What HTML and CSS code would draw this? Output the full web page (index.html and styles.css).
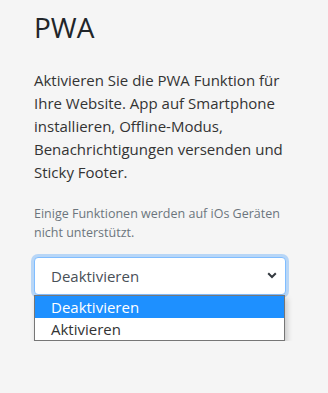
FILE: index.html
```html
<!DOCTYPE html>
<html lang="de">
<head>
    <meta charset="UTF-8">
    <meta name="viewport" content="width=device-width, initial-scale=1.0">
    <title>PWA</title>
    <link rel="stylesheet" href="styles.css">
</head>
<body>
    <div class="settings">
        <h3 class="title">PWA</h3>

        <p class="intro">Aktivieren Sie die PWA Funktion für Ihre Website. App auf Smartphone installieren, Offline-Modus, Benachrichtigungen versenden und Sticky Footer.</p>
        <p class="hint">Einige Funktionen werden auf iOs Geräten nicht unterstützt.</p>

        <div class="select-wrap">
            <div class="select-box">
                <span>Deaktivieren</span>
                <svg class="chevron" width="10" height="7" viewBox="0 0 10 7">
                    <path d="M1.2 1.2 L5 5 L8.8 1.2" fill="none" stroke="#343a40" stroke-width="2"/>
                </svg>
            </div>
            <!-- open dropdown list -->
            <div class="select-list">
                <div class="option selected">Deaktivieren</div>
                <div class="option">Aktivieren</div>
            </div>
        </div>
    </div>
</body>
</html>
```

FILE: styles.css
```css
body {
    margin: 0;
    background-color: #f5f5f5;
    font-family: "Open Sans", "Noto Sans", sans-serif;
    color: #212529;
}

.settings {
    width: 252px;
    padding: 11px 0 0 34px;
}

.title {
    margin: 0 0 24px;
    font-size: 28px;
    font-weight: 500;
    line-height: 1.2;
}

.intro {
    margin: 0 0 20px;
    font-size: 15px;
    line-height: 23px;
    color: #333;
}

.hint {
    margin: 0 0 14px;
    font-size: 12.5px;
    line-height: 19.5px;
    color: #6c757d;
}

.select-box {
    display: flex;
    align-items: center;
    justify-content: space-between;
    height: 36px;
    padding: 0 8px 0 16px;
    background-color: #fff;
    border: 1px solid #80bdff;
    border-radius: 4px;
    box-shadow: 0 0 0 3px rgba(0, 123, 255, 0.25);
    font-size: 15px;
    color: #495057;
}

.select-list {
    margin: 0 1px 0 0;
    background-color: #fff;
    border: 1px solid #767676;
    box-shadow: 2px 3px 6px rgba(0, 0, 0, 0.2);
}

.option {
    height: 22px;
    line-height: 22px;
    padding-left: 16px;
    font-size: 15px;
    color: #333;
}

.option.selected {
    background-color: #1e90ff;
    color: #fff;
}
```
